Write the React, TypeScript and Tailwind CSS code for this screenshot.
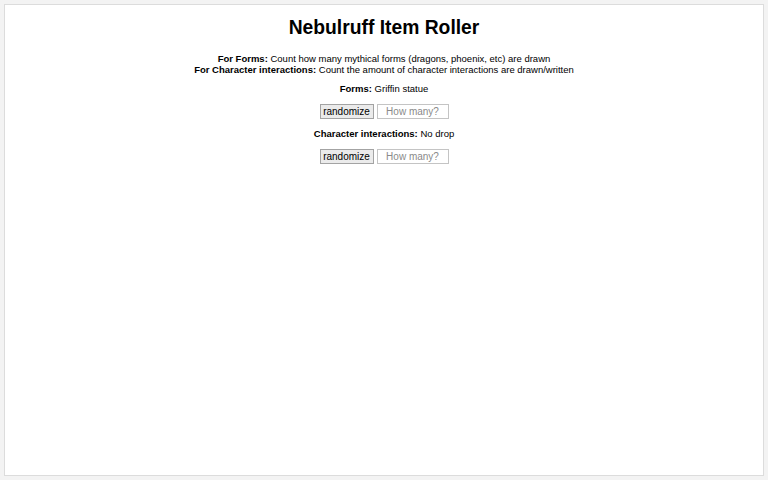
export default function App() {
  return (
    <div className="h-[480px] w-[768px] bg-[#f3f3f3] p-[4px] font-['Liberation_Sans',Arial,sans-serif] text-black">
      <div className="h-[472px] border border-[#dcdcdc] bg-white text-center">
        <h1 className="mt-[11px] text-[19.3px] font-bold leading-[24px]">Nebulruff Item Roller</h1>
        <div className="mt-[13px] text-[9.5px] leading-[11px]">
          <p>
            <b>For Forms:</b> Count how many mythical forms (dragons, phoenix, etc) are drawn
          </p>
          <p>
            <b>For Character interactions:</b> Count the amount of character interactions are drawn/written
          </p>
        </div>
        <p className="mt-[8px] text-[9.5px] leading-[11px]">
          <b>Forms:</b> Griffin statue
        </p>
        <Roller />
        <p className="mt-[9px] text-[9.5px] leading-[11px]">
          <b>Character interactions:</b> No drop
        </p>
        <Roller />
      </div>
    </div>
  );
}

function Roller() {
  return (
    <div className="mt-[10px] flex justify-center gap-[3px]">
      <button className="h-[15px] w-[54px] border border-[#a3a3a3] bg-[#ebebeb] text-[10px] leading-[12px]">
        randomize
      </button>
      <input
        placeholder="How many?"
        className="h-[15px] w-[72px] border border-[#c4c4c4] text-center text-[10px] leading-[12px] placeholder:text-[#8a8a8a]"
      />
    </div>
  );
}
